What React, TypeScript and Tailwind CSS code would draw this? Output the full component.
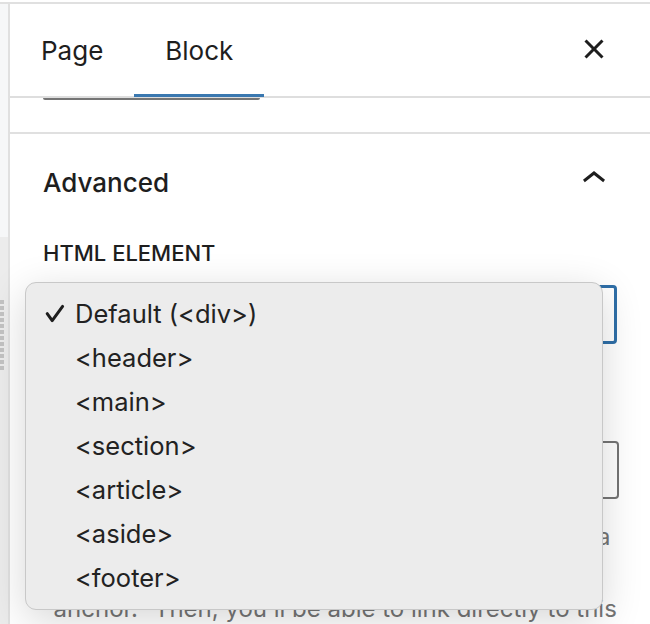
import React from 'react';

// Block inspector sidebar, "Advanced" panel with the HTML element menu open.

const ELEMENTS = [
  'Default (<div>)',
  '<header>',
  '<main>',
  '<section>',
  '<article>',
  '<aside>',
  '<footer>',
];

function CloseIcon() {
  return (
    <svg width="48" height="48" viewBox="0 0 24 24" fill="#1e1e1e">
      <path d="M12 13.06l3.712 3.713 1.061-1.06L13.061 12l3.712-3.712-1.06-1.06L12 10.938 8.288 7.227l-1.061 1.06L10.939 12l-3.712 3.712 1.06 1.061L12 13.061z" />
    </svg>
  );
}

function ChevronUp() {
  return (
    <svg width="48" height="48" viewBox="0 0 24 24" fill="#1e1e1e">
      <path d="M6.5 12.4L12 8l5.5 4.4-.9 1.2L12 10l-4.6 3.6-.9-1.2z" />
    </svg>
  );
}

function Check() {
  return (
    <svg width="20" height="20" viewBox="0 0 20 20" fill="none">
      <path d="M2.2 9.6L7.2 16.6L17.6 2.4" stroke="#1e1e1e" strokeWidth="3" strokeLinecap="round" strokeLinejoin="round" />
    </svg>
  );
}

function LeftStrip() {
  return (
    <div className="flex w-[8px] shrink-0 flex-col">
      <div className="h-[233px] shrink-0 bg-[#f6f7f8]" />
      <div className="flex flex-1 flex-col bg-[#ececec] pt-[63px]">
        <div className="flex flex-col gap-[2px]">
          {Array.from({ length: 12 }).map((_, i) => (
            <div key={i} className="h-[4px] w-[4px] bg-[#c3c3c3]" />
          ))}
        </div>
      </div>
    </div>
  );
}

function ElementMenu() {
  return (
    <div className="absolute left-[25px] top-[282px] w-[578px] rounded-[11px] border border-[#c8c8c8] bg-[#ececec] py-[9px] shadow-[0_10px_40px_rgba(0,0,0,0.16)]">
      {ELEMENTS.map((el, i) => (
        <div key={el} className="flex h-[44px] items-center">
          <div className="flex w-[49px] justify-start pl-[19px]">{i === 0 && <Check />}</div>
          <span className="text-[25.5px] text-[#222]">{el}</span>
        </div>
      ))}
    </div>
  );
}

export default function App() {
  return (
    <div className="relative flex h-[624px] w-[650px] flex-col overflow-hidden bg-white font-['Inter','Noto_Sans',sans-serif] text-[#1e1e1e]">
      <div className="h-[2px] shrink-0 bg-white" />
      <div className="h-[2px] shrink-0 bg-[#e0e0e0]" />
      <div className="flex min-h-0 flex-1 overflow-hidden">
        <LeftStrip />
        <div className="w-[2px] shrink-0 bg-[#e0e0e0]" />

        <div className="flex min-w-0 flex-1 flex-col">
          {/* Tabs */}
          <div className="flex h-[94px] shrink-0 items-center border-b-2 border-[#dedede] pb-[2px]">
            <button className="flex h-full items-center px-[31px] pt-[2px] text-[26px]">Page</button>
            <button className="relative flex h-full items-center px-[31px] pt-[2px] text-[26px]">
              Block
              <span className="absolute bottom-[-3px] left-0 right-0 h-[3px] bg-[#3a78b0]" />
            </button>
            <div className="flex-1" />
            <button className="mr-[32px] flex h-[48px] w-[48px] items-center justify-center">
              <CloseIcon />
            </button>
          </div>

          {/* bottom edge of the scrolled-away block */}
          <div className="h-[34px] shrink-0">
            <div className="ml-[33px] h-[2px] w-[217px] rounded-b-[2px] bg-[#757575]" />
          </div>
          <div className="h-[2px] shrink-0 bg-[#e0e0e0]" />

          {/* Advanced panel */}
          <div className="flex h-[96px] shrink-0 items-center justify-between pl-[33px] pr-[32px]">
            <span className="text-[26px] font-medium">Advanced</span>
            <span className="-mt-[6px]">
              <ChevronUp />
            </span>
          </div>

          <div className="flex shrink-0 flex-col pl-[33px] pr-[33px]">
            <label className="mt-[7px] text-[22px] font-medium uppercase leading-[32px]">HTML element</label>
            <div className="mt-[16px] flex h-[59px] shrink-0 items-center rounded-[4px] border-[3px] border-[#2f6fa8] px-[16px] text-[26px]">
              Default (&lt;div&gt;)
            </div>

            <label className="mt-[32px] text-[22px] font-medium uppercase leading-[32px]">HTML anchor</label>
            <div className="-mr-[2px] mt-[33px] h-[58px] shrink-0 rounded-[4px] border-2 border-[#757575]" />

            <p className="mt-[20px] whitespace-nowrap text-[24px] leading-[36px] text-[#757575]">
              <span className="tracking-[-0.25px]">Enter a word or two — without spaces — to make a</span>
              <br />
              unique web address just for this block, called an
              <br />
              “anchor.” Then, you’ll be able to link directly to this
            </p>
          </div>
        </div>
      </div>

      <ElementMenu />
    </div>
  );
}
